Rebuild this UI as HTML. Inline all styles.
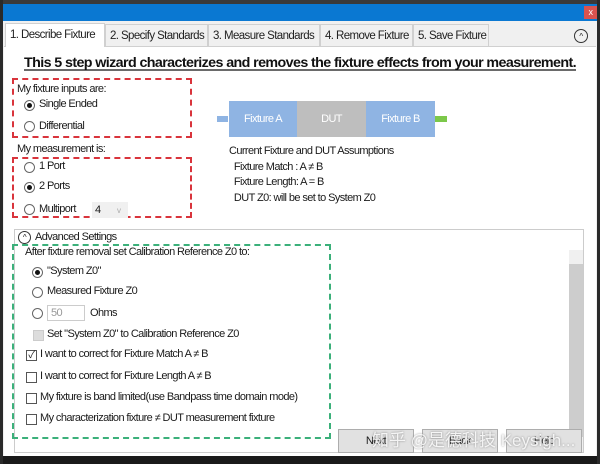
<!DOCTYPE html>
<html><head><meta charset="utf-8"><style>
*{box-sizing:border-box;margin:0;padding:0}
body{width:600px;height:464px;overflow:hidden;background:#1e1e1e;font-family:"Liberation Sans","Noto Sans CJK SC",sans-serif;font-size:11px;letter-spacing:-0.6px;color:#1a1a1a;position:relative}
.a{position:absolute;white-space:nowrap}
.rad{position:absolute;width:11px;height:11px;border:1px solid #666;border-radius:50%;background:#fff}
.rad.on::after{content:"";position:absolute;left:2px;top:2px;width:5px;height:5px;border-radius:50%;background:#111}
.cb{position:absolute;width:11px;height:11px;border:1px solid #555;background:#fff}
.tab{position:absolute;top:24px;height:22px;background:#f0f0f0;border:1px solid #d0d0d0;border-bottom:none;padding:5px 4px 0;white-space:nowrap;color:#222;font-size:11.5px}
.btn{position:absolute;top:429px;height:24px;width:76px;background:#e1e1e1;border:1px solid #adadad;text-align:center;line-height:22px}
</style></head><body>
<div class="a" style="left:0;top:0;width:600px;height:5px;background:#3a3a3a"></div>
<div class="a" style="left:3px;top:4px;width:594px;height:17px;background:#0a78d2"></div>
<div class="a" style="left:584px;top:6px;width:13px;height:13px;background:#d9534f;color:#fff;font-size:9px;text-align:center;line-height:13px">x</div>
<div class="a" style="left:3px;top:21px;width:594px;height:436px;background:#f0f0f0"></div>
<div class="a" style="left:4px;top:46px;width:592px;height:410px;background:#fff;border-top:1px solid #d0d0d0"></div>
<div class="tab" style="left:5px;top:23px;height:24px;background:#fff;width:100px">1. Describe Fixture</div>
<div class="tab" style="left:105px;width:103px">2. Specify Standards</div>
<div class="tab" style="left:208px;width:112px">3. Measure Standards</div>
<div class="tab" style="left:320px;width:93px">4. Remove Fixture</div>
<div class="tab" style="left:413px;width:76px">5. Save Fixture</div>
<div class="a" style="left:574px;top:29px;width:14px;height:14px;border:1px solid #333;border-radius:50%;font-size:8px;text-align:center;line-height:13px">^</div>
<svg class="a" style="left:0;top:52px" width="600" height="22"><text x="24" y="15" textLength="552" lengthAdjust="spacingAndGlyphs" font-family="Liberation Sans" font-weight="bold" font-size="14" fill="#111">This 5 step wizard characterizes and removes the fixture effects from your measurement.</text><line x1="24" y1="18" x2="576" y2="18" stroke="#111" stroke-width="1.3"/></svg>
<div class="a" style="left:12px;top:78px;width:180px;height:60px;border:2px dashed #d9343c"></div>
<div class="a" style="left:17px;top:83px">My fixture inputs are:</div>
<div class="rad on" style="left:24px;top:100px"></div><div class="a" style="left:39px;top:98px">Single Ended</div>
<div class="rad" style="left:24px;top:121px"></div><div class="a" style="left:39px;top:120px">Differential</div>
<div class="a" style="left:17px;top:143px">My measurement is:</div>
<div class="a" style="left:12px;top:157px;width:180px;height:61px;border:2px dashed #d9343c"></div>
<div class="rad" style="left:24px;top:162px"></div><div class="a" style="left:39px;top:160px">1 Port</div>
<div class="rad on" style="left:24px;top:182px"></div><div class="a" style="left:39px;top:180px">2 Ports</div>
<div class="rad" style="left:24px;top:204px"></div><div class="a" style="left:39px;top:203px">Multiport</div>
<div class="a" style="left:92px;top:202px;width:36px;height:16px;background:#f0f0f0;padding-left:3px;padding-top:2px">4 <span style="color:#aaa;font-size:8px;margin-left:14px">v</span></div>
<div class="a" style="left:217px;top:116px;width:11px;height:6px;background:#8fb4e3"></div>
<div class="a" style="left:229px;top:101px;width:68px;height:36px;background:#8fb4e3;color:#fff;text-align:center;line-height:36px">Fixture A</div>
<div class="a" style="left:297px;top:101px;width:69px;height:36px;background:#bebebe;color:#fff;text-align:center;line-height:36px">DUT</div>
<div class="a" style="left:366px;top:101px;width:69px;height:36px;background:#8fb4e3;color:#fff;text-align:center;line-height:36px">Fixture B</div>
<div class="a" style="left:435px;top:116px;width:12px;height:6px;background:#7cc84a"></div>
<div class="a" style="left:229px;top:144px;line-height:15.5px">Current Fixture and DUT Assumptions<br>&nbsp;&nbsp;Fixture Match : A ≠ B<br>&nbsp;&nbsp;Fixture Length: A = B<br>&nbsp;&nbsp;DUT Z0: will be set to System Z0</div>
<div class="a" style="left:14px;top:229px;width:570px;height:224px;border:1px solid #ccc;background:#fff"></div>
<div class="a" style="left:18px;top:231px;width:13px;height:13px;border:1px solid #333;border-radius:50%;font-size:8px;text-align:center;line-height:12px">^</div>
<div class="a" style="left:35px;top:231px">Advanced Settings</div>
<div class="a" style="left:569px;top:250px;width:14px;height:202px;background:#f0f0f0"></div>
<div class="a" style="left:569px;top:264px;width:14px;height:173px;background:#cdcdcd"></div>
<div class="a" style="left:12px;top:244px;width:319px;height:195px;border:2px dashed #3bb07a"></div>
<div class="a" style="left:25px;top:246px">After fixture removal set Calibration Reference Z0 to:</div>
<div class="rad on" style="left:32px;top:267px"></div><div class="a" style="left:47px;top:265px">"System Z0"</div>
<div class="rad" style="left:32px;top:287px"></div><div class="a" style="left:47px;top:285px">Measured Fixture Z0</div>
<div class="rad" style="left:32px;top:308px"></div><div class="a" style="left:47px;top:305px;width:38px;height:16px;border:1px solid #ccc;color:#999;padding-left:3px;line-height:14px">50</div><div class="a" style="left:90px;top:307px">Ohms</div>
<div class="cb" style="left:33px;top:330px;background:#ddd;border-color:#ccc"></div><div class="a" style="left:47px;top:328px">Set "System Z0" to Calibration Reference Z0</div>
<div class="cb" style="left:26px;top:350px;font-size:10px;line-height:9px;text-align:center">✓</div><div class="a" style="left:40px;top:348px">I want to correct for Fixture Match A ≠ B</div>
<div class="cb" style="left:26px;top:372px"></div><div class="a" style="left:40px;top:370px">I want to correct for Fixture Length A ≠ B</div>
<div class="cb" style="left:26px;top:393px"></div><div class="a" style="left:40px;top:391px">My fixture is band limited(use Bandpass time domain mode)</div>
<div class="cb" style="left:26px;top:414px"></div><div class="a" style="left:40px;top:412px">My characterization fixture ≠ DUT measurement fixture</div>
<div class="btn" style="left:338px">Next</div>
<div class="btn" style="left:422px">Back</div>
<div class="btn" style="left:506px">Help</div>
<div class="a" style="left:372px;top:426px;font-size:17px;letter-spacing:0;color:rgba(255,255,255,0.85);text-shadow:0 0 2px #888">知乎 @是德科技 Keysigh...</div>
<div class="a" style="left:0;top:456px;width:600px;height:8px;background:#1a1a1a"></div>
<div class="a" style="left:0;top:0;width:3px;height:464px;background:#2a2a2a"></div>
<div class="a" style="left:597px;top:0;width:3px;height:464px;background:#2a2a2a"></div>
</body></html>
